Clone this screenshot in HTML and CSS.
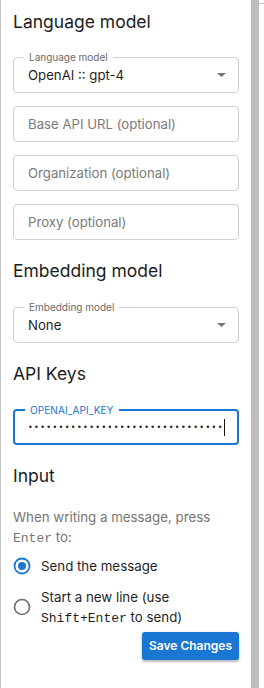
FILE: index.html
```html
<!DOCTYPE html>
<html>
<head>
<meta charset="utf-8">
<link rel="stylesheet" href="styles.css">
</head>
<body>
<div class="edge"></div>
<div class="panel">
  <h2 class="heading first">Language model</h2>
  <div class="field select notched">
    <span class="label">Language model</span>
    <span class="value">OpenAI :: gpt-4</span>
    <svg class="arrow" width="9" height="4" viewBox="0 0 9 4"><path d="M0 0h9L4.5 4z" fill="#757575"/></svg>
  </div>
  <div class="field gap"><span class="placeholder">Base API URL (optional)</span></div>
  <div class="field gap"><span class="placeholder">Organization (optional)</span></div>
  <div class="field gap"><span class="placeholder">Proxy (optional)</span></div>

  <h2 class="heading h-embed">Embedding model</h2>
  <div class="field select notched">
    <span class="label">Embedding model</span>
    <span class="value">None</span>
    <svg class="arrow" width="9" height="4" viewBox="0 0 9 4"><path d="M0 0h9L4.5 4z" fill="#757575"/></svg>
  </div>

  <h2 class="heading h-keys">API Keys</h2>
  <div class="field focused notched">
    <span class="label blue">OPENAI_API_KEY</span>
    <span class="dots">••••••••••••••••••••••••••••••••</span><span class="caret"></span>
  </div>

  <h2 class="heading h-input">Input</h2>
  <p class="desc">When writing a message, press <code>Enter</code> to:</p>
  <div class="radio-row">
    <svg class="radio" width="18" height="18" viewBox="0 0 18 18"><circle cx="9" cy="9" r="7.5" fill="none" stroke="#1976d2" stroke-width="1.8"/><circle cx="9" cy="9" r="4" fill="#1976d2"/></svg>
    <span class="rtext">Send the message</span>
  </div>
  <div class="radio-row second">
    <svg class="radio" width="18" height="18" viewBox="0 0 18 18"><circle cx="9" cy="9" r="7.5" fill="none" stroke="#6b6b6b" stroke-width="1.6"/></svg>
    <span class="rtext">Start a new line (use <code>Shift+Enter</code> to send)</span>
  </div>
  <div class="actions"><button class="save">Save Changes</button></div>
</div>
<div class="scroll"></div>
<div class="right"><div class="tick"></div></div>
</body>
</html>
```
FILE: styles.css
```css
* { box-sizing: border-box; }
html, body { margin: 0; padding: 0; }
body {
  width: 264px;
  height: 688px;
  display: flex;
  background: #fff;
  font-family: "Inter", "Liberation Sans", sans-serif;
  color: #1f1f1f;
  overflow: hidden;
}
.edge { width: 1px; background: #c4c4c4; flex: none; }
.panel {
  width: 250px;
  flex: none;
  padding: 0 12px 0 12px;
  background: #fff;
}
.scroll { width: 8px; background: #bdbdbd; flex: none; }
.right { width: 5px; flex: none; background: #fff; }
.tick { height: 1px; margin-top: 3px; background: #c8c8c8; }

.heading {
  margin: 0;
  font-size: 17.5px;
  font-weight: 400;
  line-height: 24px;
  color: #1c1c1c;
}
.heading.first { margin-top: 10px; }
.h-embed { margin-top: 19px; }
.h-keys { margin-top: 19px; }
.h-input { margin-top: 19px; }

.field {
  position: relative;
  height: 36px;
  border: 1px solid #cfcfcf;
  border-radius: 4px;
  display: flex;
  align-items: center;
  padding: 0 14px;
  font-size: 13.2px;
}
.heading.first + .field { margin-top: 23px; }
.field.gap { margin-top: 13px; }
.h-embed + .field { margin-top: 24px; }
.h-keys + .field { margin-top: 23px; }
.field .label {
  position: absolute;
  left: 10px;
  top: -7px;
  padding: 0 5px;
  background: #fff;
  font-size: 10px;
  line-height: 12px;
  color: #6a6a6a;
}
.field .label.blue { color: #1976d2; letter-spacing: 0.1px; }
.value { color: #1f1f1f; }
.placeholder { color: #7a7a7a; }
.arrow { position: absolute; right: 12px; top: 15px; }
.field.focused {
  border: 2px solid #1976d2;
  padding: 0 13px;
}
.dots {
  font-size: 8px;
  letter-spacing: 1.4px;
  color: #1f1f1f;
  font-family: "DejaVu Sans", sans-serif;
  white-space: nowrap;
}
.caret { width: 1px; height: 17px; background: #111; margin-left: 0; }

.desc {
  margin: 19px 0 0;
  font-size: 13.3px;
  line-height: 20px;
  color: #757575;
}
code {
  font-family: "Liberation Mono", monospace;
  font-size: 13px;
  line-height: 1;
}
.radio-row {
  display: flex;
  align-items: center;
  margin-top: 9px;
  font-size: 13.3px;
  line-height: 20.5px;
  color: #1f1f1f;
}
.radio-row.second { margin-top: 10px; }
.radio { flex: none; margin-left: 0; margin-right: 10px; }
.actions { display: flex; justify-content: flex-end; margin-top: 4px; }
.save {
  height: 28px;
  width: 97px;
  border: none;
  border-radius: 3px;
  background: #1976d2;
  color: #fff;
  font-family: "Inter", "Liberation Sans", sans-serif;
  font-size: 12px;
  font-weight: 600;
  box-shadow: 0 2px 2px rgba(0,0,0,0.2), 0 1px 4px rgba(0,0,0,0.12);
  padding: 0;
}
```
